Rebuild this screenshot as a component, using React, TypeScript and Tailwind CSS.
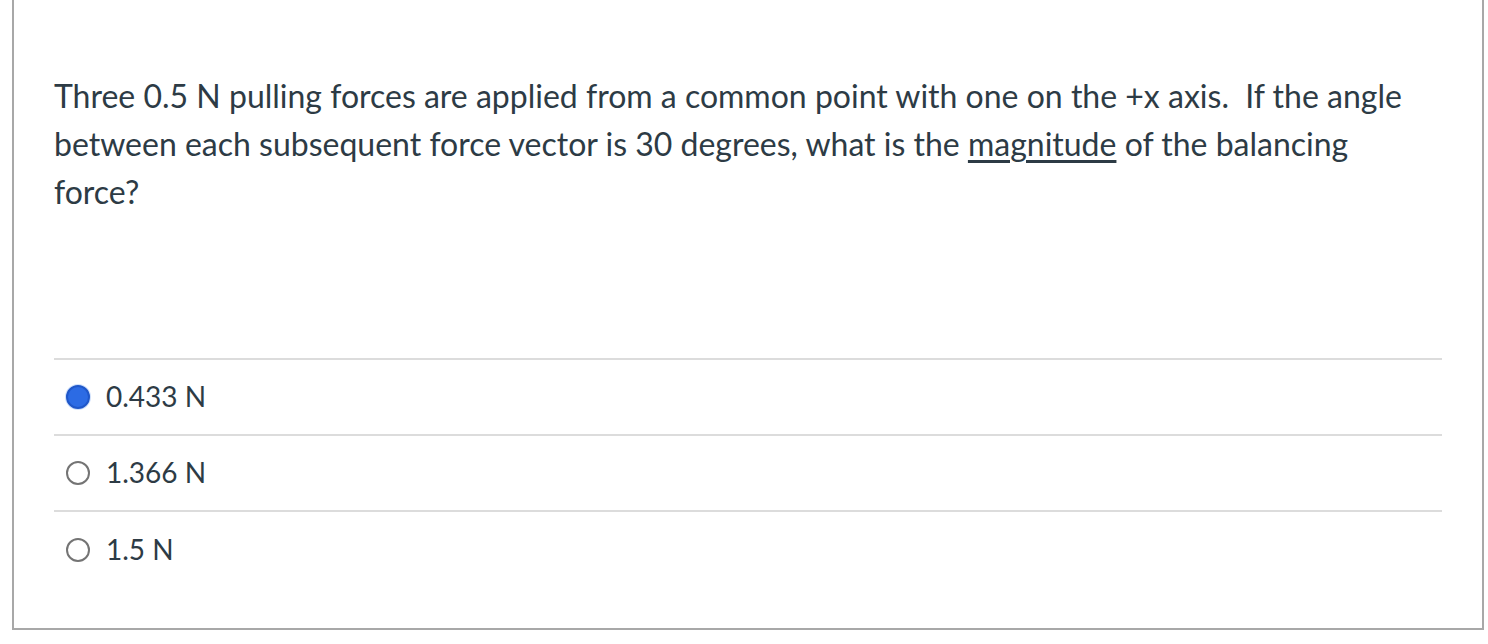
import React from "react";

const ANSWERS = [
  { label: "0.433 N", selected: true },
  { label: "1.366 N", selected: false },
  { label: "1.5 N", selected: false },
];

function Radio({ selected }: { selected: boolean }) {
  if (selected) {
    return (
      <span className="w-[24px] h-[24px] rounded-full bg-[#2c6be4] border-2 border-[#1f57c9] shadow-[0_0_0_1px_#cfe0fb] shrink-0" />
    );
  }
  return <span className="w-[24px] h-[24px] rounded-full border-2 border-[#747474] bg-white shrink-0" />;
}

export default function App() {
  return (
    <div className="w-[1488px] h-[644px] bg-white overflow-hidden" style={{ fontFamily: "Lato, 'Open Sans', sans-serif" }}>
      <div className="ml-[12px] mr-[4px] mt-[-20px] h-[650px] border-2 border-[#a8a8a8] px-[40px] pt-[90px] text-[#2d3b45]">
        <p className="text-[32px] leading-[48px] pr-[10px]">
          Three 0.5 N pulling forces are applied from a common point with one on the +x axis.&nbsp; If the angle between each
          subsequent force vector is 30 degrees, what is the{" "}
          <span className="underline decoration-[3px] underline-offset-[4px]">magnitude</span> of the balancing force?
        </p>
        <div className="mt-[142px] border-t-2 border-[#dcdcdc]">
          {ANSWERS.map((a, i) => (
            <div
              key={a.label}
              className={`flex items-center gap-[16px] h-[76px] pl-[12px] ${i < ANSWERS.length - 1 ? "border-b-2 border-[#dcdcdc]" : ""}`}
            >
              <Radio selected={a.selected} />
              <span className="text-[28px] -mt-[3px]">{a.label}</span>
            </div>
          ))}
        </div>
      </div>
    </div>
  );
}
